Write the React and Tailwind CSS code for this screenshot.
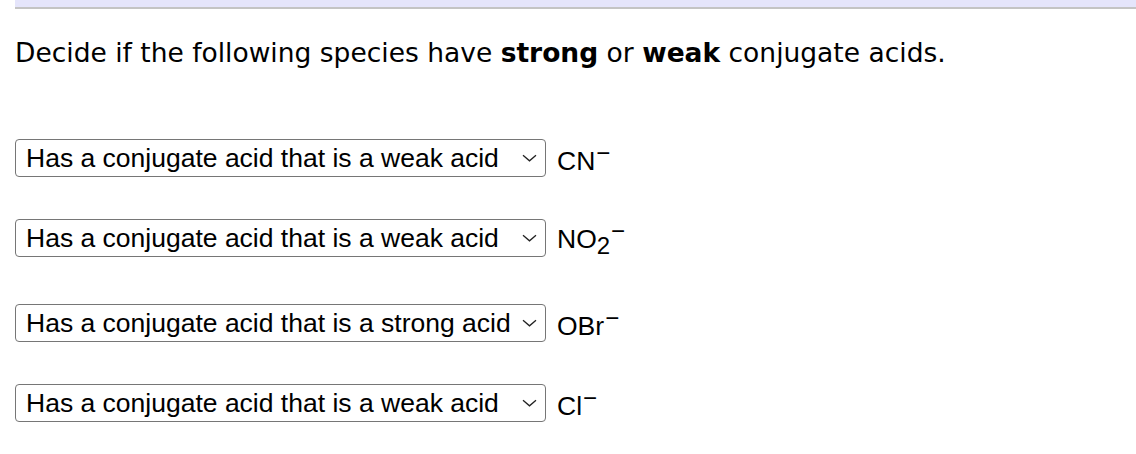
const ARIAL = { fontFamily: "Arial, 'Liberation Sans', sans-serif" };

function Chevron() {
  return (
    <svg width="15" height="8" viewBox="0 0 15 8" className="shrink-0">
      <path d="M1 1.2 L7.5 6.8 L14 1.2" fill="none" stroke="#222" strokeWidth="1.3" />
    </svg>
  );
}

function Select({ value }) {
  return (
    <div className="w-[531px] h-[38px] shrink-0 flex items-center justify-between border border-[#767676] rounded-[4px] pl-[10px] pr-[8px] bg-white text-[26.5px] text-black leading-none">
      <span>{value}</span>
      <Chevron />
    </div>
  );
}

function Row({ value, children, className }) {
  return (
    <div className={"flex items-center " + className} style={ARIAL}>
      <Select value={value} />
      <div className="ml-[11px] h-[38px] flex items-center text-[26.5px] text-black leading-none whitespace-nowrap">
        <span>{children}</span>
      </div>
    </div>
  );
}

const Minus = () => (
  <span className="text-[24px] leading-none align-[9px] ml-[1px]">−</span>
);

export default function App() {
  return (
    <div className="w-[1136px] h-[454px] bg-white overflow-hidden">
      <div className="ml-[15px] h-[9px] bg-[#e5e5fb] border-b-2 border-[#c4c4c4]" />
      <p
        className="ml-[15px] mt-[28px] text-[26.5px] leading-[32px] text-black"
        style={{ fontFamily: "Verdana, 'DejaVu Sans', sans-serif" }}
      >
        Decide if the following species have <b>strong</b> or <b>weak</b> conjugate acids.
      </p>
      <div className="ml-[15px] mt-[70px] flex flex-col">
        <Row value="Has a conjugate acid that is a weak acid" className="">
          CN<Minus />
        </Row>
        <Row value="Has a conjugate acid that is a weak acid" className="mt-[42px]">
          NO<span className="text-[24px] leading-none align-[-6px]">2</span><Minus />
        </Row>
        <Row value="Has a conjugate acid that is a strong acid" className="mt-[47px]">
          OBr<Minus />
        </Row>
        <Row value="Has a conjugate acid that is a weak acid" className="mt-[42px]">
          Cl<Minus />
        </Row>
      </div>
    </div>
  );
}
